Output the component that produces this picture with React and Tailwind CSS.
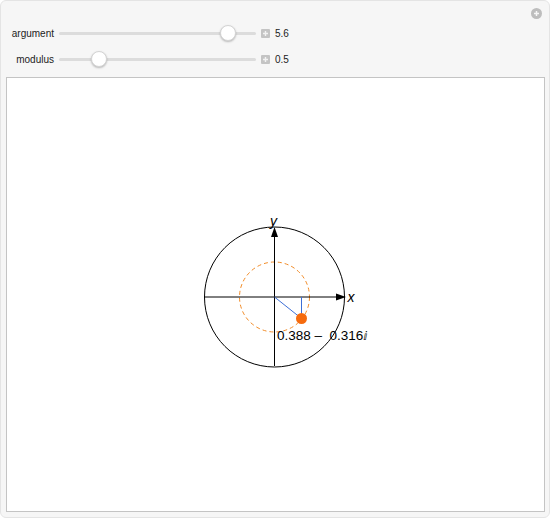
import React from 'react';

const font = { fontFamily: '"Liberation Sans", Arial, sans-serif' };

const SliderRow = ({ label, pos, value }) => (
  <div className="flex items-center h-[26px]">
    <div className="w-[54px] text-right text-[10px] text-[#222] pr-[1px]">{label}</div>
    <div className="relative w-[197px] h-[16px] ml-[4px] flex items-center">
      <div className="w-full h-[3px] rounded-full bg-[#dcdcdc]" />
      <div
        className="absolute top-0 w-[16px] h-[16px] rounded-full bg-white border border-[#d4d4d4] shadow-[0_1px_2px_rgba(0,0,0,0.25)]"
        style={{ left: pos - 8 }}
      />
    </div>
    <div className="ml-[5px] w-[9px] h-[9px] bg-[#c4c4c4] rounded-[1px] flex items-center justify-center">
      <svg width="7" height="7" viewBox="0 0 7 7">
        <path d="M3.5 1v5M1 3.5h5" stroke="#f2f2f2" strokeWidth="1.4" />
      </svg>
    </div>
    <div className="ml-[5px] text-[10px] text-[#222]">{value}</div>
  </div>
);

export default function App() {
  const cx = 274.5;
  const cy = 297;
  return (
    <div className="w-[550px] h-[518px] bg-[#f6f6f6] border border-[#e4e4e4] rounded-[6px] relative" style={font}>
      <div className="absolute right-[7px] top-[7px] w-[11px] h-[11px] rounded-full bg-[#bdbdbd] flex items-center justify-center">
        <svg width="7" height="7" viewBox="0 0 7 7">
          <path d="M3.5 1v5M1 3.5h5" stroke="#f6f6f6" strokeWidth="1.5" />
        </svg>
      </div>
      <div className="pt-[19px]">
        <SliderRow label="argument" pos={169} value="5.6" />
        <SliderRow label="modulus" pos={40} value="0.5" />
      </div>
      <div className="ml-[5px] mt-[5px] w-[539px] h-[435px] bg-white border border-[#c4c4c4]">
        <svg width="537" height="433" viewBox="7 78 537 433">
          <circle cx={cx} cy={cy} r="70" fill="none" stroke="#000" strokeWidth="1" />
          <circle cx={cx} cy={cy} r="35" fill="none" stroke="#f28c28" strokeWidth="1" strokeDasharray="4 3" />
          <line x1="204" y1={cy} x2="338" y2={cy} stroke="#000" strokeWidth="1" />
          <polygon points={`346,${cy} 336,${cy - 3.5} 336,${cy + 3.5}`} fill="#000" />
          <line x1={cx} y1="366" x2={cx} y2="235" stroke="#000" strokeWidth="1" />
          <polygon points={`${cx},227 ${cx - 3.5},237 ${cx + 3.5},237`} fill="#000" />
          <line x1={cx} y1={cy} x2="301.5" y2="318.5" stroke="#3d6fd6" strokeWidth="1" />
          <line x1="301.5" y1={cy} x2="301.5" y2="318.5" stroke="#3d6fd6" strokeWidth="1" />
          <circle cx="301.5" cy="318.5" r="5.5" fill="#f66b0e" />
          <text x="270" y="226" fontSize="14" fontStyle="italic" fontFamily="Liberation Sans, Arial, sans-serif">y</text>
          <text x="347.5" y="302" fontSize="14" fontStyle="italic" fontFamily="Liberation Sans, Arial, sans-serif">x</text>
          <text x="277" y="340" fontSize="13.5" fontFamily="Liberation Sans, Arial, sans-serif" fill="#000" xmlSpace="preserve">
            0.388 –  0.316<tspan fontFamily="DejaVu Sans, sans-serif" fontSize="12" fontStyle="italic">ⅈ</tspan>
          </text>
        </svg>
      </div>
    </div>
  );
}
